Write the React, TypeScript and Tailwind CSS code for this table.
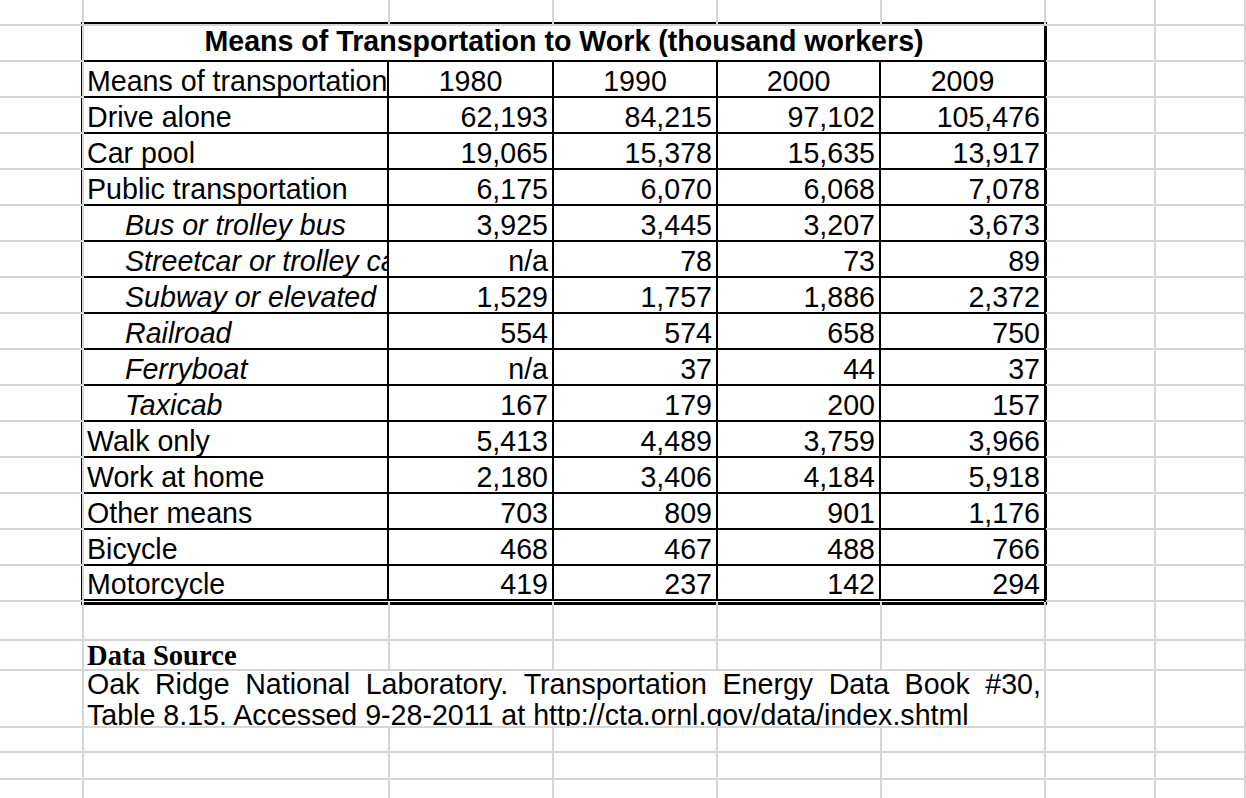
import React from 'react';
import clsx from 'clsx';

type DataRow = { label: string; sub?: boolean; values: string[] };

const years = ['1980', '1990', '2000', '2009'];

const data: DataRow[] = [
  { label: 'Drive alone', values: ['62,193', '84,215', '97,102', '105,476'] },
  { label: 'Car pool', values: ['19,065', '15,378', '15,635', '13,917'] },
  { label: 'Public transportation', values: ['6,175', '6,070', '6,068', '7,078'] },
  { label: 'Bus or trolley bus', sub: true, values: ['3,925', '3,445', '3,207', '3,673'] },
  { label: 'Streetcar or trolley car', sub: true, values: ['n/a', '78', '73', '89'] },
  { label: 'Subway or elevated', sub: true, values: ['1,529', '1,757', '1,886', '2,372'] },
  { label: 'Railroad', sub: true, values: ['554', '574', '658', '750'] },
  { label: 'Ferryboat', sub: true, values: ['n/a', '37', '44', '37'] },
  { label: 'Taxicab', sub: true, values: ['167', '179', '200', '157'] },
  { label: 'Walk only', values: ['5,413', '4,489', '3,759', '3,966'] },
  { label: 'Work at home', values: ['2,180', '3,406', '4,184', '5,918'] },
  { label: 'Other means', values: ['703', '809', '901', '1,176'] },
  { label: 'Bicycle', values: ['468', '467', '488', '766'] },
  { label: 'Motorcycle', values: ['419', '237', '142', '294'] },
];

// table block B2:F17 with its own black borders
const TransportTable: React.FC = () => {
  return (
    <div className="col-start-2 col-span-5 row-start-2 row-span-16 -mt-[4px] -ml-[3px] -mr-[1px] -mb-[3px] border-[3px] border-black bg-white grid grid-cols-[305px_165px_164px_163px_163px] grid-rows-[37px_repeat(14,36px)_35px] content-start">
      {/* merged title */}
      <div className="col-span-5 border-b-2 border-black flex items-end justify-center pb-[4px] leading-[30px] font-bold whitespace-nowrap">
        Means of Transportation to Work (thousand workers)
      </div>

      {/* header row */}
      <div className="border-b-2 border-r-2 border-black flex items-end pl-[3px] leading-[30px] whitespace-nowrap overflow-hidden">
        Means of transportation
      </div>
      {years.map((y, i) => (
        <div
          key={y}
          className={clsx(
            'border-b-2 border-black flex items-end justify-center leading-[30px]',
            i < 3 && 'border-r-2'
          )}
        >
          {y}
        </div>
      ))}

      {data.map((row) => (
        <React.Fragment key={row.label}>
          <div
            className={clsx(
              'border-b-2 border-r-2 border-black flex items-end leading-[30px] whitespace-nowrap overflow-hidden',
              row.sub ? 'pl-[41px] italic' : 'pl-[3px]'
            )}
          >
            {row.label}
          </div>
          {row.values.map((v, i) => (
            <div
              key={i}
              className={clsx(
                'border-b-2 border-black flex items-end justify-end pr-[4px] leading-[30px] whitespace-nowrap',
                i < 3 && 'border-r-2'
              )}
            >
              {v}
            </div>
          ))}
        </React.Fragment>
      ))}
    </div>
  );
};

export default function App() {
  const cells: React.ReactNode[] = [];

  for (let r = 1; r <= 23; r++) {
    for (let c = 1; c <= 8; c++) {
      if (r >= 2 && r <= 17 && c >= 2 && c <= 6) continue;
      if (r === 20 && c >= 3 && c <= 6) continue;

      const base = clsx('border-[#d6d6d6] border-r-2', r < 23 && 'border-b-2');

      if (r === 19 && c === 2) {
        cells.push(
          <div key={`${r}-${c}`} className={clsx(base, 'flex items-end pl-[3px] leading-[26px] whitespace-nowrap font-bold font-["Liberation_Serif",serif]')}>
            Data Source
          </div>
        );
      } else if (r === 20 && c === 2) {
        cells.push(
          <div key={`${r}-${c}`} className={clsx(base, 'col-span-5 overflow-hidden px-[3px]')}>
            <div className="leading-[26px] whitespace-nowrap flex justify-between">
              {'Oak Ridge National Laboratory. Transportation Energy Data Book #30,'.split(' ').map((w, i) => (
                <span key={i}>{w}</span>
              ))}
            </div>
            <div className="leading-[36px] whitespace-nowrap">
              Table 8.15. Accessed 9-28-2011 at http://cta.ornl.gov/data/index.shtml
            </div>
          </div>
        );
      } else {
        cells.push(<div key={`${r}-${c}`} className={base} />);
      }
    }
  }

  return (
    <div className="w-[1246px] h-[798px] overflow-hidden bg-white text-black text-[28.6px] font-['Liberation_Sans',Arial,sans-serif]">
      <div className="grid h-full grid-cols-[84px_306px_164px_164px_164px_164px_110px_1fr] grid-rows-[26px_36px_repeat(15,36px)_39px_30px_57px_25px_27px_1fr]">
        <TransportTable />
        {cells}
      </div>
    </div>
  );
}
